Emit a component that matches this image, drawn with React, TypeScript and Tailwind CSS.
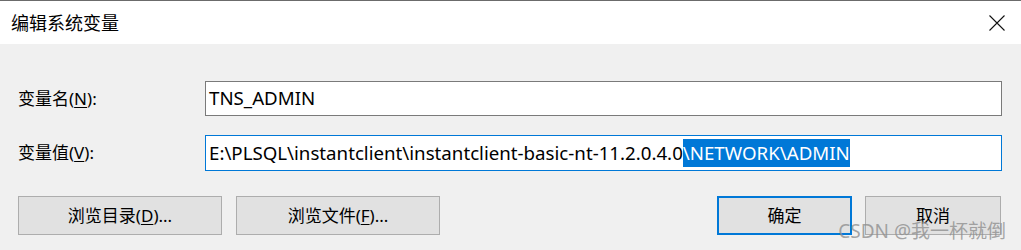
const font = { fontFamily: '"Noto Sans", "Noto Sans CJK SC", sans-serif' };

function Btn({ children, primary }: { children: React.ReactNode; primary?: boolean }) {
  return (
    <button
      className={
        primary
          ? "flex h-[39px] w-full items-center justify-center border-2 border-[#0078d7] bg-[#e1e1e1] text-[17px] text-black"
          : "flex h-[39px] w-full items-center justify-center border border-[#adadad] bg-[#e1e1e1] text-[17px] text-black"
      }
    >
      {children}
    </button>
  );
}

export default function App() {
  return (
    <div className="relative flex h-[250px] w-[1021px] flex-col overflow-hidden bg-[#f0f0f0] text-black" style={font}>
      {/* title bar */}
      <div className="flex h-[44px] items-center justify-between border-t border-[#6b6b6b] bg-white pl-[11px] pr-[16px]">
        <span className="text-[18px] leading-none">编辑系统变量</span>
        <svg width="16" height="16" viewBox="0 0 16 16" className="mt-[1px]">
          <path d="M0.5 0.5 L15.5 15.5 M15.5 0.5 L0.5 15.5" stroke="#111" strokeWidth="1.1" fill="none" />
        </svg>
      </div>

      <div className="flex flex-col pl-[18px] pt-[37px]">
        <div className="flex items-center">
          <span className="w-[187px] text-[17px]">
            变量名(<span className="underline underline-offset-2">N</span>):
          </span>
          <div className="flex h-[35px] w-[797px] items-center border border-[#7a7a7a] bg-white pl-[3px] text-[18.7px]">
            TNS_ADMIN
          </div>
        </div>

        <div className="mt-[19px] flex items-center">
          <span className="w-[187px] text-[17px]">
            变量值(<span className="underline underline-offset-2">V</span>):
          </span>
          <div className="flex h-[36px] w-[797px] items-center border border-[#0078d7] bg-white pl-[3px] text-[18.7px] whitespace-pre">
            <span>E:\PLSQL\instantclient\instantclient-basic-nt-11.2.0.4.0</span>
            <span className="bg-[#0078d7] text-white">\NETWORK\ADMIN</span>
          </div>
        </div>

        <div className="mt-[25px] flex items-center">
          <div className="w-[204px]">
            <Btn>
              浏览目录(<span className="underline underline-offset-2">D</span>)...
            </Btn>
          </div>
          <div className="ml-[14px] w-[204px]">
            <Btn>
              浏览文件(<span className="underline underline-offset-2">F</span>)...
            </Btn>
          </div>
          <div className="ml-[277px] w-[135px]">
            <Btn primary>确定</Btn>
          </div>
          <div className="ml-[13px] w-[136px]">
            <Btn>取消</Btn>
          </div>
        </div>
      </div>

      {/* watermark */}
      <span className="absolute bottom-[9px] right-[15px] text-[19px] leading-none text-[#8f8f8f]/80">CSDN @我一杯就倒</span>
    </div>
  );
}
